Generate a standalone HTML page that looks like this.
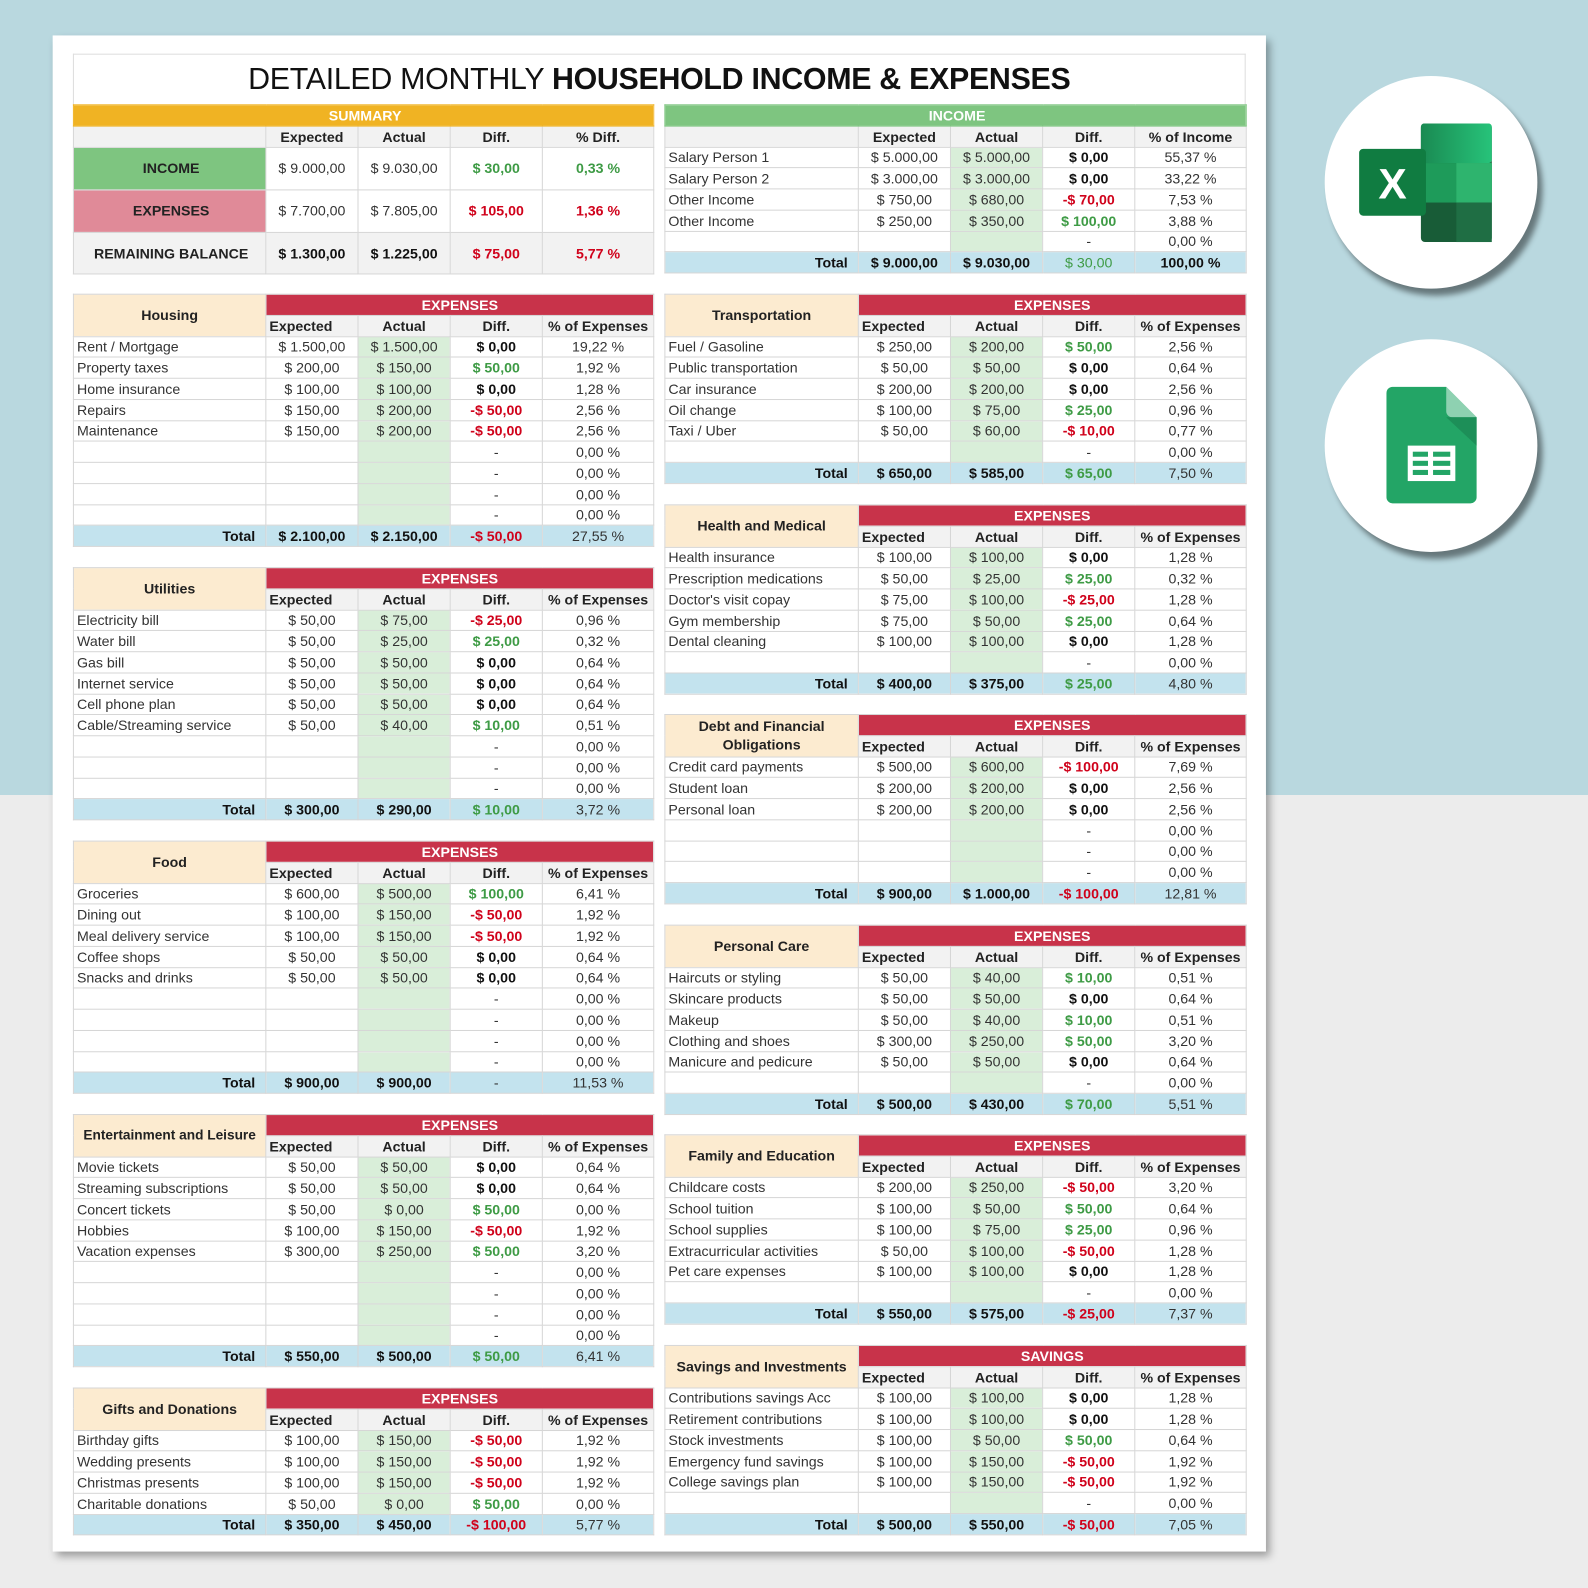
<!DOCTYPE html>
<html><head><meta charset="utf-8"><style>
*{margin:0;padding:0;box-sizing:border-box}
html,body{width:1588px;height:1588px;overflow:hidden}
body{background:#ececec;font-family:"Liberation Sans",sans-serif;color:#333}
#o{position:relative;width:1588px;height:1588px;overflow:hidden;background:#ececec}
.bgtop{position:absolute;left:0;top:0;width:1588px;height:795px;background:#b9d8df}
#w{position:absolute;left:0;top:0;width:1568px;height:1568px;transform:scale(1.01276);transform-origin:0 0}
.paper{position:absolute;left:52px;top:35px;width:1198px;height:1497px;background:#fff;box-shadow:4px 5px 8px rgba(0,0,0,.35)}
.title{position:absolute;left:72px;top:53px;width:1158px;height:50px;border:1px solid #ddd;border-bottom:none;text-align:center;font-size:30px;line-height:50px;color:#111;letter-spacing:-.3px}
.title b{font-weight:bold}
table{position:absolute;border-collapse:collapse;table-layout:fixed;font-size:14px}
td{border:1px solid #d6d6d6;padding:0;height:20.75px;line-height:18px;text-align:center;white-space:nowrap;overflow:hidden}
td:first-child{text-align:left;padding-left:3px}
.a{background:#d9eed9}
.b{font-weight:bold;color:#111}
.g{font-weight:bold;color:#3e9b45}
.r{font-weight:bold;color:#d0021b}
.ch td{background:#f2f2f2;font-weight:bold;color:#222}
.exp{background:#c8334a;color:#fff;font-weight:bold;text-align:center}
td.lab{background:#fcebd0;font-weight:bold;text-align:center;color:#222;padding:0 2px;white-space:normal;line-height:18px}
.tot td{background:#c3e3ee}
.tot td:first-child{text-align:right;padding-right:10px;font-weight:bold;color:#111}
.tb td:nth-child(2),.tb td:nth-child(3){font-weight:bold;color:#111}
.ic{position:absolute;width:210px;height:210px;border-radius:50%;background:#fff;box-shadow:5px 7px 6px rgba(0,0,0,.45)}
</style></head><body><div id="o"><div class="bgtop"></div><div id="w">
<div class="paper"></div>
<div class="title">DETAILED MONTHLY <b>HOUSEHOLD INCOME &amp; EXPENSES</b></div>

<table style="left:72px;top:103px;width:573px">
<col style="width:190px"><col style="width:91px"><col style="width:91px"><col style="width:91px"><col style="width:110px">
<tr><td colspan="5" style="background:#f0b323;color:#fff;font-weight:bold;text-align:center;border-color:#f0b323">SUMMARY</td></tr>
<tr class="ch"><td></td><td>Expected</td><td>Actual</td><td>Diff.</td><td>% Diff.</td></tr>
<tr style="height:42px"><td style="background:#7ec580;font-weight:bold;text-align:center;color:#222;height:42px">INCOME</td><td>$ 9.000,00</td><td>$ 9.030,00</td><td class="g">$ 30,00</td><td class="g">0,33 %</td></tr>
<tr style="height:42px"><td style="background:#e08a98;font-weight:bold;text-align:center;color:#222;height:42px">EXPENSES</td><td>$ 7.700,00</td><td>$ 7.805,00</td><td class="r">$ 105,00</td><td class="r">1,36 %</td></tr>
<tr style="height:41px;background:#f2f2f2"><td style="font-weight:bold;text-align:center;color:#222;height:41px">REMAINING BALANCE</td><td class="b">$ 1.300,00</td><td class="b">$ 1.225,00</td><td class="r">$ 75,00</td><td class="r">5,77 %</td></tr>
</table>

<table style="left:656px;top:103px;width:574px">
<col style="width:191px"><col style="width:91px"><col style="width:91px"><col style="width:91px"><col style="width:110px">
<tr><td colspan="5" style="background:#7ec580;color:#fff;font-weight:bold;text-align:center;border-color:#7ec580">INCOME</td></tr>
<tr class="ch"><td></td><td>Expected</td><td>Actual</td><td>Diff.</td><td>% of Income</td></tr>
<tr><td>Salary Person 1</td><td>$ 5.000,00</td><td class="a">$ 5.000,00</td><td class="b">$ 0,00</td><td>55,37 %</td></tr>
<tr><td>Salary Person 2</td><td>$ 3.000,00</td><td class="a">$ 3.000,00</td><td class="b">$ 0,00</td><td>33,22 %</td></tr>
<tr><td>Other Income</td><td>$ 750,00</td><td class="a">$ 680,00</td><td class="r">-$ 70,00</td><td>7,53 %</td></tr>
<tr><td>Other Income</td><td>$ 250,00</td><td class="a">$ 350,00</td><td class="g">$ 100,00</td><td>3,88 %</td></tr>
<tr><td></td><td></td><td class="a"></td><td>-</td><td>0,00 %</td></tr>
<tr class="tot tb"><td>Total</td><td>$ 9.000,00</td><td>$ 9.030,00</td><td style="color:#3e9b45">$ 30,00</td><td class="b">100,00 %</td></tr>
</table>

<table style="left:72px;top:290px;width:573px">
<col style="width:190px"><col style="width:91px"><col style="width:91px"><col style="width:91px"><col style="width:110px">
<tr><td rowspan="2" class="lab">Housing</td><td colspan="4" class="exp">EXPENSES</td></tr>
<tr class="ch"><td>Expected</td><td>Actual</td><td>Diff.</td><td>% of Expenses</td></tr>
<tr><td>Rent / Mortgage</td><td>$ 1.500,00</td><td class="a">$ 1.500,00</td><td class="b">$ 0,00</td><td>19,22 %</td></tr>
<tr><td>Property taxes</td><td>$ 200,00</td><td class="a">$ 150,00</td><td class="g">$ 50,00</td><td>1,92 %</td></tr>
<tr><td>Home insurance</td><td>$ 100,00</td><td class="a">$ 100,00</td><td class="b">$ 0,00</td><td>1,28 %</td></tr>
<tr><td>Repairs</td><td>$ 150,00</td><td class="a">$ 200,00</td><td class="r">-$ 50,00</td><td>2,56 %</td></tr>
<tr><td>Maintenance</td><td>$ 150,00</td><td class="a">$ 200,00</td><td class="r">-$ 50,00</td><td>2,56 %</td></tr>
<tr><td></td><td></td><td class="a"></td><td>-</td><td>0,00 %</td></tr>
<tr><td></td><td></td><td class="a"></td><td>-</td><td>0,00 %</td></tr>
<tr><td></td><td></td><td class="a"></td><td>-</td><td>0,00 %</td></tr>
<tr><td></td><td></td><td class="a"></td><td>-</td><td>0,00 %</td></tr>
<tr class="tot tb"><td>Total</td><td>$ 2.100,00</td><td>$ 2.150,00</td><td class="r">-$ 50,00</td><td>27,55 %</td></tr>
</table>

<table style="left:72px;top:560px;width:573px">
<col style="width:190px"><col style="width:91px"><col style="width:91px"><col style="width:91px"><col style="width:110px">
<tr><td rowspan="2" class="lab">Utilities</td><td colspan="4" class="exp">EXPENSES</td></tr>
<tr class="ch"><td>Expected</td><td>Actual</td><td>Diff.</td><td>% of Expenses</td></tr>
<tr><td>Electricity bill</td><td>$ 50,00</td><td class="a">$ 75,00</td><td class="r">-$ 25,00</td><td>0,96 %</td></tr>
<tr><td>Water bill</td><td>$ 50,00</td><td class="a">$ 25,00</td><td class="g">$ 25,00</td><td>0,32 %</td></tr>
<tr><td>Gas bill</td><td>$ 50,00</td><td class="a">$ 50,00</td><td class="b">$ 0,00</td><td>0,64 %</td></tr>
<tr><td>Internet service</td><td>$ 50,00</td><td class="a">$ 50,00</td><td class="b">$ 0,00</td><td>0,64 %</td></tr>
<tr><td>Cell phone plan</td><td>$ 50,00</td><td class="a">$ 50,00</td><td class="b">$ 0,00</td><td>0,64 %</td></tr>
<tr><td>Cable/Streaming service</td><td>$ 50,00</td><td class="a">$ 40,00</td><td class="g">$ 10,00</td><td>0,51 %</td></tr>
<tr><td></td><td></td><td class="a"></td><td>-</td><td>0,00 %</td></tr>
<tr><td></td><td></td><td class="a"></td><td>-</td><td>0,00 %</td></tr>
<tr><td></td><td></td><td class="a"></td><td>-</td><td>0,00 %</td></tr>
<tr class="tot tb"><td>Total</td><td>$ 300,00</td><td>$ 290,00</td><td class="g">$ 10,00</td><td>3,72 %</td></tr>
</table>

<table style="left:72px;top:830px;width:573px">
<col style="width:190px"><col style="width:91px"><col style="width:91px"><col style="width:91px"><col style="width:110px">
<tr><td rowspan="2" class="lab">Food</td><td colspan="4" class="exp">EXPENSES</td></tr>
<tr class="ch"><td>Expected</td><td>Actual</td><td>Diff.</td><td>% of Expenses</td></tr>
<tr><td>Groceries</td><td>$ 600,00</td><td class="a">$ 500,00</td><td class="g">$ 100,00</td><td>6,41 %</td></tr>
<tr><td>Dining out</td><td>$ 100,00</td><td class="a">$ 150,00</td><td class="r">-$ 50,00</td><td>1,92 %</td></tr>
<tr><td>Meal delivery service</td><td>$ 100,00</td><td class="a">$ 150,00</td><td class="r">-$ 50,00</td><td>1,92 %</td></tr>
<tr><td>Coffee shops</td><td>$ 50,00</td><td class="a">$ 50,00</td><td class="b">$ 0,00</td><td>0,64 %</td></tr>
<tr><td>Snacks and drinks</td><td>$ 50,00</td><td class="a">$ 50,00</td><td class="b">$ 0,00</td><td>0,64 %</td></tr>
<tr><td></td><td></td><td class="a"></td><td>-</td><td>0,00 %</td></tr>
<tr><td></td><td></td><td class="a"></td><td>-</td><td>0,00 %</td></tr>
<tr><td></td><td></td><td class="a"></td><td>-</td><td>0,00 %</td></tr>
<tr><td></td><td></td><td class="a"></td><td>-</td><td>0,00 %</td></tr>
<tr class="tot tb"><td>Total</td><td>$ 900,00</td><td>$ 900,00</td><td>-</td><td>11,53 %</td></tr>
</table>

<table style="left:72px;top:1100px;width:573px">
<col style="width:190px"><col style="width:91px"><col style="width:91px"><col style="width:91px"><col style="width:110px">
<tr><td rowspan="2" class="lab" style="font-size:13.5px;white-space:nowrap">Entertainment and Leisure</td><td colspan="4" class="exp">EXPENSES</td></tr>
<tr class="ch"><td>Expected</td><td>Actual</td><td>Diff.</td><td>% of Expenses</td></tr>
<tr><td>Movie tickets</td><td>$ 50,00</td><td class="a">$ 50,00</td><td class="b">$ 0,00</td><td>0,64 %</td></tr>
<tr><td>Streaming subscriptions</td><td>$ 50,00</td><td class="a">$ 50,00</td><td class="b">$ 0,00</td><td>0,64 %</td></tr>
<tr><td>Concert tickets</td><td>$ 50,00</td><td class="a">$ 0,00</td><td class="g">$ 50,00</td><td>0,00 %</td></tr>
<tr><td>Hobbies</td><td>$ 100,00</td><td class="a">$ 150,00</td><td class="r">-$ 50,00</td><td>1,92 %</td></tr>
<tr><td>Vacation expenses</td><td>$ 300,00</td><td class="a">$ 250,00</td><td class="g">$ 50,00</td><td>3,20 %</td></tr>
<tr><td></td><td></td><td class="a"></td><td>-</td><td>0,00 %</td></tr>
<tr><td></td><td></td><td class="a"></td><td>-</td><td>0,00 %</td></tr>
<tr><td></td><td></td><td class="a"></td><td>-</td><td>0,00 %</td></tr>
<tr><td></td><td></td><td class="a"></td><td>-</td><td>0,00 %</td></tr>
<tr class="tot tb"><td>Total</td><td>$ 550,00</td><td>$ 500,00</td><td class="g">$ 50,00</td><td>6,41 %</td></tr>
</table>

<table style="left:72px;top:1370px;width:573px">
<col style="width:190px"><col style="width:91px"><col style="width:91px"><col style="width:91px"><col style="width:110px">
<tr><td rowspan="2" class="lab">Gifts and Donations</td><td colspan="4" class="exp">EXPENSES</td></tr>
<tr class="ch"><td>Expected</td><td>Actual</td><td>Diff.</td><td>% of Expenses</td></tr>
<tr><td>Birthday gifts</td><td>$ 100,00</td><td class="a">$ 150,00</td><td class="r">-$ 50,00</td><td>1,92 %</td></tr>
<tr><td>Wedding presents</td><td>$ 100,00</td><td class="a">$ 150,00</td><td class="r">-$ 50,00</td><td>1,92 %</td></tr>
<tr><td>Christmas presents</td><td>$ 100,00</td><td class="a">$ 150,00</td><td class="r">-$ 50,00</td><td>1,92 %</td></tr>
<tr><td>Charitable donations</td><td>$ 50,00</td><td class="a">$ 0,00</td><td class="g">$ 50,00</td><td>0,00 %</td></tr>
<tr class="tot tb"><td>Total</td><td>$ 350,00</td><td>$ 450,00</td><td class="r">-$ 100,00</td><td>5,77 %</td></tr>
</table>

<table style="left:656px;top:290px;width:574px">
<col style="width:191px"><col style="width:91px"><col style="width:91px"><col style="width:91px"><col style="width:110px">
<tr><td rowspan="2" class="lab">Transportation</td><td colspan="4" class="exp">EXPENSES</td></tr>
<tr class="ch"><td>Expected</td><td>Actual</td><td>Diff.</td><td>% of Expenses</td></tr>
<tr><td>Fuel / Gasoline</td><td>$ 250,00</td><td class="a">$ 200,00</td><td class="g">$ 50,00</td><td>2,56 %</td></tr>
<tr><td>Public transportation</td><td>$ 50,00</td><td class="a">$ 50,00</td><td class="b">$ 0,00</td><td>0,64 %</td></tr>
<tr><td>Car insurance</td><td>$ 200,00</td><td class="a">$ 200,00</td><td class="b">$ 0,00</td><td>2,56 %</td></tr>
<tr><td>Oil change</td><td>$ 100,00</td><td class="a">$ 75,00</td><td class="g">$ 25,00</td><td>0,96 %</td></tr>
<tr><td>Taxi / Uber</td><td>$ 50,00</td><td class="a">$ 60,00</td><td class="r">-$ 10,00</td><td>0,77 %</td></tr>
<tr><td></td><td></td><td class="a"></td><td>-</td><td>0,00 %</td></tr>
<tr class="tot tb"><td>Total</td><td>$ 650,00</td><td>$ 585,00</td><td class="g">$ 65,00</td><td>7,50 %</td></tr>
</table>

<table style="left:656px;top:498px;width:574px">
<col style="width:191px"><col style="width:91px"><col style="width:91px"><col style="width:91px"><col style="width:110px">
<tr><td rowspan="2" class="lab">Health and Medical</td><td colspan="4" class="exp">EXPENSES</td></tr>
<tr class="ch"><td>Expected</td><td>Actual</td><td>Diff.</td><td>% of Expenses</td></tr>
<tr><td>Health insurance</td><td>$ 100,00</td><td class="a">$ 100,00</td><td class="b">$ 0,00</td><td>1,28 %</td></tr>
<tr><td>Prescription medications</td><td>$ 50,00</td><td class="a">$ 25,00</td><td class="g">$ 25,00</td><td>0,32 %</td></tr>
<tr><td>Doctor's visit copay</td><td>$ 75,00</td><td class="a">$ 100,00</td><td class="r">-$ 25,00</td><td>1,28 %</td></tr>
<tr><td>Gym membership</td><td>$ 75,00</td><td class="a">$ 50,00</td><td class="g">$ 25,00</td><td>0,64 %</td></tr>
<tr><td>Dental cleaning</td><td>$ 100,00</td><td class="a">$ 100,00</td><td class="b">$ 0,00</td><td>1,28 %</td></tr>
<tr><td></td><td></td><td class="a"></td><td>-</td><td>0,00 %</td></tr>
<tr class="tot tb"><td>Total</td><td>$ 400,00</td><td>$ 375,00</td><td class="g">$ 25,00</td><td>4,80 %</td></tr>
</table>

<table style="left:656px;top:705px;width:574px">
<col style="width:191px"><col style="width:91px"><col style="width:91px"><col style="width:91px"><col style="width:110px">
<tr><td rowspan="2" class="lab">Debt and Financial Obligations</td><td colspan="4" class="exp">EXPENSES</td></tr>
<tr class="ch"><td>Expected</td><td>Actual</td><td>Diff.</td><td>% of Expenses</td></tr>
<tr><td>Credit card payments</td><td>$ 500,00</td><td class="a">$ 600,00</td><td class="r">-$ 100,00</td><td>7,69 %</td></tr>
<tr><td>Student loan</td><td>$ 200,00</td><td class="a">$ 200,00</td><td class="b">$ 0,00</td><td>2,56 %</td></tr>
<tr><td>Personal loan</td><td>$ 200,00</td><td class="a">$ 200,00</td><td class="b">$ 0,00</td><td>2,56 %</td></tr>
<tr><td></td><td></td><td class="a"></td><td>-</td><td>0,00 %</td></tr>
<tr><td></td><td></td><td class="a"></td><td>-</td><td>0,00 %</td></tr>
<tr><td></td><td></td><td class="a"></td><td>-</td><td>0,00 %</td></tr>
<tr class="tot tb"><td>Total</td><td>$ 900,00</td><td>$ 1.000,00</td><td class="r">-$ 100,00</td><td>12,81 %</td></tr>
</table>

<table style="left:656px;top:913px;width:574px">
<col style="width:191px"><col style="width:91px"><col style="width:91px"><col style="width:91px"><col style="width:110px">
<tr><td rowspan="2" class="lab">Personal Care</td><td colspan="4" class="exp">EXPENSES</td></tr>
<tr class="ch"><td>Expected</td><td>Actual</td><td>Diff.</td><td>% of Expenses</td></tr>
<tr><td>Haircuts or styling</td><td>$ 50,00</td><td class="a">$ 40,00</td><td class="g">$ 10,00</td><td>0,51 %</td></tr>
<tr><td>Skincare products</td><td>$ 50,00</td><td class="a">$ 50,00</td><td class="b">$ 0,00</td><td>0,64 %</td></tr>
<tr><td>Makeup</td><td>$ 50,00</td><td class="a">$ 40,00</td><td class="g">$ 10,00</td><td>0,51 %</td></tr>
<tr><td>Clothing and shoes</td><td>$ 300,00</td><td class="a">$ 250,00</td><td class="g">$ 50,00</td><td>3,20 %</td></tr>
<tr><td>Manicure and pedicure</td><td>$ 50,00</td><td class="a">$ 50,00</td><td class="b">$ 0,00</td><td>0,64 %</td></tr>
<tr><td></td><td></td><td class="a"></td><td>-</td><td>0,00 %</td></tr>
<tr class="tot tb"><td>Total</td><td>$ 500,00</td><td>$ 430,00</td><td class="g">$ 70,00</td><td>5,51 %</td></tr>
</table>

<table style="left:656px;top:1120px;width:574px">
<col style="width:191px"><col style="width:91px"><col style="width:91px"><col style="width:91px"><col style="width:110px">
<tr><td rowspan="2" class="lab">Family and Education</td><td colspan="4" class="exp">EXPENSES</td></tr>
<tr class="ch"><td>Expected</td><td>Actual</td><td>Diff.</td><td>% of Expenses</td></tr>
<tr><td>Childcare costs</td><td>$ 200,00</td><td class="a">$ 250,00</td><td class="r">-$ 50,00</td><td>3,20 %</td></tr>
<tr><td>School tuition</td><td>$ 100,00</td><td class="a">$ 50,00</td><td class="g">$ 50,00</td><td>0,64 %</td></tr>
<tr><td>School supplies</td><td>$ 100,00</td><td class="a">$ 75,00</td><td class="g">$ 25,00</td><td>0,96 %</td></tr>
<tr><td>Extracurricular activities</td><td>$ 50,00</td><td class="a">$ 100,00</td><td class="r">-$ 50,00</td><td>1,28 %</td></tr>
<tr><td>Pet care expenses</td><td>$ 100,00</td><td class="a">$ 100,00</td><td class="b">$ 0,00</td><td>1,28 %</td></tr>
<tr><td></td><td></td><td class="a"></td><td>-</td><td>0,00 %</td></tr>
<tr class="tot tb"><td>Total</td><td>$ 550,00</td><td>$ 575,00</td><td class="r">-$ 25,00</td><td>7,37 %</td></tr>
</table>

<table style="left:656px;top:1328px;width:574px">
<col style="width:191px"><col style="width:91px"><col style="width:91px"><col style="width:91px"><col style="width:110px">
<tr><td rowspan="2" class="lab">Savings and Investments</td><td colspan="4" class="exp">SAVINGS</td></tr>
<tr class="ch"><td>Expected</td><td>Actual</td><td>Diff.</td><td>% of Expenses</td></tr>
<tr><td>Contributions savings Acc</td><td>$ 100,00</td><td class="a">$ 100,00</td><td class="b">$ 0,00</td><td>1,28 %</td></tr>
<tr><td>Retirement contributions</td><td>$ 100,00</td><td class="a">$ 100,00</td><td class="b">$ 0,00</td><td>1,28 %</td></tr>
<tr><td>Stock investments</td><td>$ 100,00</td><td class="a">$ 50,00</td><td class="g">$ 50,00</td><td>0,64 %</td></tr>
<tr><td>Emergency fund savings</td><td>$ 100,00</td><td class="a">$ 150,00</td><td class="r">-$ 50,00</td><td>1,92 %</td></tr>
<tr><td>College savings plan</td><td>$ 100,00</td><td class="a">$ 150,00</td><td class="r">-$ 50,00</td><td>1,92 %</td></tr>
<tr><td></td><td></td><td class="a"></td><td>-</td><td>0,00 %</td></tr>
<tr class="tot tb"><td>Total</td><td>$ 500,00</td><td>$ 550,00</td><td class="r">-$ 50,00</td><td>7,05 %</td></tr>
</table>

<div class="ic" style="left:1308px;top:75px"></div>
<div class="ic" style="left:1308px;top:335px"></div>
<svg style="position:absolute;left:1300px;top:100px" width="200" height="420" viewBox="1300 100 200 420">
<defs><linearGradient id="xg" x1="0" y1="0" x2="1" y2="0"><stop offset="0" stop-color="#1a8a52"/><stop offset="1" stop-color="#27c37a"/></linearGradient></defs>
<rect x="1403" y="122" width="70" height="117" rx="4" fill="#185c37"/>
<rect x="1403" y="122" width="70" height="39" rx="3" fill="url(#xg)"/>
<rect x="1403" y="161" width="70" height="39" fill="#1e9b5a"/>
<rect x="1438" y="161" width="35" height="39" fill="#2eb46e"/>
<rect x="1438" y="200" width="35" height="39" fill="#1f6e44"/>
<rect x="1342" y="147" width="66" height="66" rx="4" fill="#107c41"/>
<text x="1375" y="196" text-anchor="middle" font-family="Liberation Sans" font-weight="bold" font-size="42" fill="#fff">X</text>
<path d="M1375 382 H1428 L1458 412 V491 a6 6 0 0 1 -6 6 H1375 a6 6 0 0 1 -6 -6 V388 a6 6 0 0 1 6 -6 Z" fill="#23a566"/>
<path d="M1428 382 L1458 412 H1434 a6 6 0 0 1 -6 -6 Z" fill="#8ed1b1"/>
<path d="M1428 412 H1458 V440 Z" fill="#1d8f58"/>
<rect x="1390" y="440" width="47" height="35" fill="#fff"/>
<rect x="1395" y="446" width="15" height="5" fill="#23a566"/><rect x="1415" y="446" width="17" height="5" fill="#23a566"/>
<rect x="1395" y="455" width="15" height="5" fill="#23a566"/><rect x="1415" y="455" width="17" height="5" fill="#23a566"/>
<rect x="1395" y="464" width="15" height="5" fill="#23a566"/><rect x="1415" y="464" width="17" height="5" fill="#23a566"/>
</svg>
</div></div></body></html>
